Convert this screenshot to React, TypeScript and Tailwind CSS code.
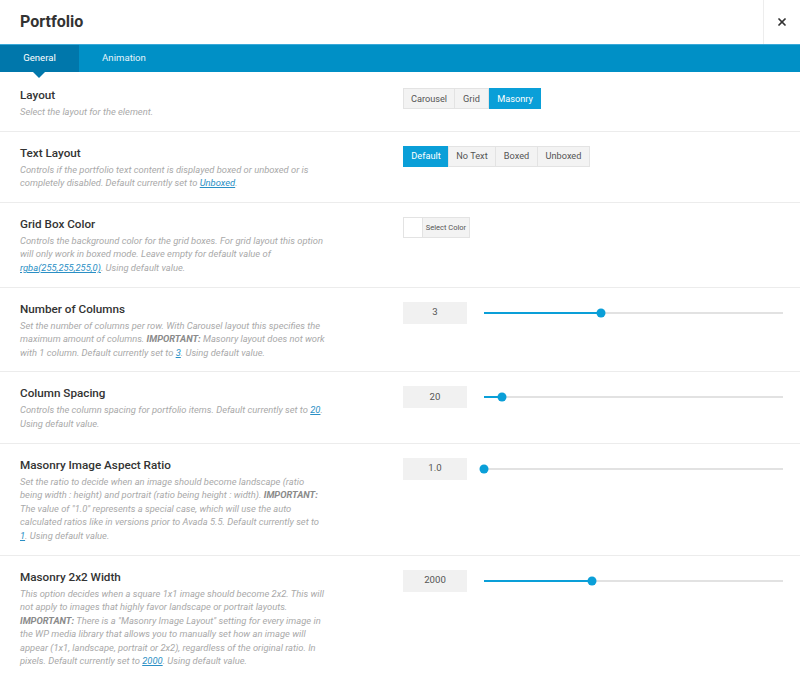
import { X } from "lucide-react";
import type { ReactNode } from "react";

const link = "text-[#2a8fc5] underline";
const strong = "font-bold text-[#8a8a8a]";

function Row({ title, children, control, first }: { title: string; children: ReactNode; control: ReactNode; first?: boolean }) {
  return (
    <div className={`flex border-b border-[#ececec] pl-5 pr-[17px] pb-[12px] ${first ? "pt-[15px]" : "pt-[13px]"}`}>
      <div className="w-[383px] shrink-0 pr-[75px]">
        <div className="text-[11.7px] font-medium leading-4 text-[#333]">{title}</div>
        <p className="mt-[2px] text-[9.4px] italic leading-[13.6px] text-[#a9a9a9]">{children}</p>
      </div>
      <div className="mt-px flex-1">{control}</div>
    </div>
  );
}

function Segmented({ items, active }: { items: { label: string; w: number }[]; active: string }) {
  return (
    <div className="flex h-[21px]">
      {items.map((it) => (
        <div
          key={it.label}
          style={{ width: it.w }}
          className={`flex items-center justify-center border text-[9.2px] ${
            it.label === active
              ? "border-[#0a9fd8] bg-[#0a9fd8] text-white"
              : "border-[#e3e3e3] bg-[#f3f3f3] text-[#555] -ml-px first:ml-0"
          }`}
        >
          {it.label}
        </div>
      ))}
    </div>
  );
}

function Slider({ value, pct }: { value: string; pct: number }) {
  return (
    <div className="flex h-[22px] items-center">
      <div className="flex h-[22px] w-[64px] items-center justify-center bg-[#f1f1f1] text-[9.6px] text-[#555]">{value}</div>
      <div className="relative ml-[17px] h-[2px] flex-1 bg-[#e2e2e2]">
        <div className="absolute left-0 top-0 h-[2px] bg-[#0a9fd8]" style={{ width: `${pct}%` }} />
        <div
          className="absolute top-1/2 h-[9px] w-[9px] -translate-x-1/2 -translate-y-1/2 rounded-full bg-[#0a9fd8]"
          style={{ left: `${pct}%` }}
        />
      </div>
    </div>
  );
}

export default function App() {
  return (
    <div className="h-[680px] w-[800px] overflow-hidden bg-white font-['Roboto',sans-serif]">
      {/* Header */}
      <div className="flex h-[44px] items-stretch">
        <div className="flex flex-1 items-center pl-5 text-[16px] font-bold text-[#333]">Portfolio</div>
        <div className="flex w-[37px] items-center justify-center border-l border-[#ededed]">
          <X className="h-3 w-3 text-[#333]" strokeWidth={3.5} />
        </div>
      </div>

      {/* Tabs */}
      <div className="relative flex h-[28px] border-t border-[#3aa9d9] bg-[#0090c6] text-[9.6px] text-white">
        <div className="relative flex w-[79px] items-center justify-center bg-[#0077ab]">
          General
          <div className="absolute left-[33px] top-full h-0 w-0 border-x-[6px] border-t-[6px] border-x-transparent border-t-[#0077ab]" />
        </div>
        <div className="flex w-[90px] items-center justify-center text-[#e6f4fa]">Animation</div>
      </div>

      <Row
        first
        title="Layout"
        control={
          <Segmented
            active="Masonry"
            items={[
              { label: "Carousel", w: 52 },
              { label: "Grid", w: 35 },
              { label: "Masonry", w: 52 },
            ]}
          />
        }
      >
        Select the layout for the element.
      </Row>

      <Row
        title="Text Layout"
        control={
          <Segmented
            active="Default"
            items={[
              { label: "Default", w: 46 },
              { label: "No Text", w: 48 },
              { label: "Boxed", w: 43 },
              { label: "Unboxed", w: 53 },
            ]}
          />
        }
      >
        Controls if the portfolio text content is displayed boxed or unboxed or is completely disabled. Default currently set to{" "}
        <span className={link}>Unboxed</span>.
      </Row>

      <Row
        title="Grid Box Color"
        control={
          <div className="flex h-[21px] w-[67px] border border-[#e3e3e3]">
            <div className="w-[19px] border-r border-[#e3e3e3] bg-white" />
            <div className="flex flex-1 items-center justify-center bg-[#f3f3f3] text-[7.5px] text-[#555]">Select Color</div>
          </div>
        }
      >
        Controls the background color for the grid boxes. For grid layout this option will only work in boxed mode. Leave empty for default value of{" "}
        <span className={link}>rgba(255,255,255,0)</span>. Using default value.
      </Row>

      <Row title="Number of Columns" control={<Slider value="3" pct={39} />}>
        Set the number of columns per row. With Carousel layout this specifies the maximum amount of columns.{" "}
        <span className={strong}>IMPORTANT:</span> Masonry layout does not work with 1 column. Default currently set to{" "}
        <span className={link}>3</span>. Using default value.
      </Row>

      <Row title="Column Spacing" control={<Slider value="20" pct={6} />}>
        Controls the column spacing for portfolio items. Default currently set to <span className={link}>20</span>. Using default value.
      </Row>

      <Row title="Masonry Image Aspect Ratio" control={<Slider value="1.0" pct={0} />}>
        Set the ratio to decide when an image should become landscape (ratio being width : height) and portrait (ratio being height : width).{" "}
        <span className={strong}>IMPORTANT:</span> The value of "1.0" represents a special case, which will use the auto calculated ratios like in
        versions prior to Avada 5.5. Default currently set to <span className={link}>1</span>. Using default value.
      </Row>

      <Row title="Masonry 2x2 Width" control={<Slider value="2000" pct={36} />}>
        This option decides when a square 1x1 image should become 2x2. This will not apply to images that highly favor landscape or portrait
        layouts. <span className={strong}>IMPORTANT:</span> There is a "Masonry Image Layout" setting for every image in the WP media library that
        allows you to manually set how an image will appear (1x1, landscape, portrait or 2x2), regardless of the original ratio. In pixels. Default
        currently set to <span className={link}>2000</span>. Using default value.
      </Row>
    </div>
  );
}
